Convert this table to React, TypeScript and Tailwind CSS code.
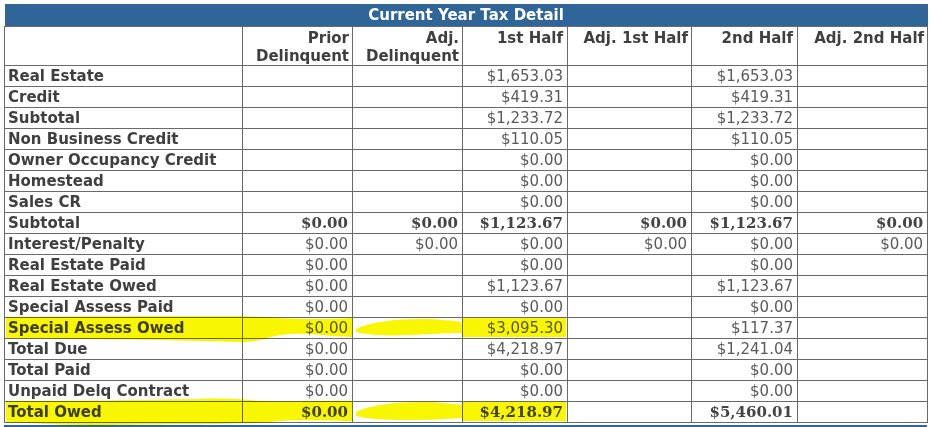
import React from 'react'

type Row = {
  label: string
  cells: string[]
  bold?: boolean
}

const ROWS: Row[] = [
  { label: 'Real Estate', cells: ['', '', '$1,653.03', '', '$1,653.03', ''] },
  { label: 'Credit', cells: ['', '', '$419.31', '', '$419.31', ''] },
  { label: 'Subtotal', cells: ['', '', '$1,233.72', '', '$1,233.72', ''] },
  { label: 'Non Business Credit', cells: ['', '', '$110.05', '', '$110.05', ''] },
  { label: 'Owner Occupancy Credit', cells: ['', '', '$0.00', '', '$0.00', ''] },
  { label: 'Homestead', cells: ['', '', '$0.00', '', '$0.00', ''] },
  { label: 'Sales CR', cells: ['', '', '$0.00', '', '$0.00', ''] },
  { label: 'Subtotal', cells: ['$0.00', '$0.00', '$1,123.67', '$0.00', '$1,123.67', '$0.00'], bold: true },
  { label: 'Interest/Penalty', cells: ['$0.00', '$0.00', '$0.00', '$0.00', '$0.00', '$0.00'] },
  { label: 'Real Estate Paid', cells: ['$0.00', '', '$0.00', '', '$0.00', ''] },
  { label: 'Real Estate Owed', cells: ['$0.00', '', '$1,123.67', '', '$1,123.67', ''] },
  { label: 'Special Assess Paid', cells: ['$0.00', '', '$0.00', '', '$0.00', ''] },
  { label: 'Special Assess Owed', cells: ['$0.00', '', '$3,095.30', '', '$117.37', ''] },
  { label: 'Total Due', cells: ['$0.00', '', '$4,218.97', '', '$1,241.04', ''] },
  { label: 'Total Paid', cells: ['$0.00', '', '$0.00', '', '$0.00', ''] },
  { label: 'Unpaid Delq Contract', cells: ['$0.00', '', '$0.00', '', '$0.00', ''] },
  { label: 'Total Owed', cells: ['$0.00', '', '$4,218.97', '', '$5,460.01', ''], bold: true },
]

const COL_WIDTHS = ['w-[238px]', 'w-[110px]', 'w-[110px]', 'w-[105px]', 'w-[124px]', 'w-[106px]', 'w-[130px]']

// yellow marker strokes, drawn over the table and multiplied in
function Highlighter() {
  return (
    <svg
      className="absolute left-0 top-0 pointer-events-none mix-blend-multiply"
      width="931"
      height="427"
      viewBox="0 0 931 427"
    >
      <g fill="#f8f600">
        {/* Special Assess Owed */}
        <path d="M6,317 C80,316 180,316 240,316 C275,317 300,321 352,318 L352,337 C320,336 300,331 275,336 C260,340 250,343 238,342 C180,340 90,339 6,338 Z" />
        <path d="M356,329 C370,322 395,319 420,319 C440,319 452,321 462,322 L462,333 C445,333 430,334 410,335 C385,336 368,335 356,332 Z" />
        <rect x="462" y="318" width="104" height="19" />
        {/* Total Owed */}
        <path d="M6,401 C60,401 140,400 200,399 C225,398 240,399 260,401 C290,403 320,400 352,401 L352,421 C320,421 300,419 270,422 C230,425 170,424 110,425 C70,426 40,423 6,422 Z" />
        <path d="M356,412 C370,405 395,402 420,402 C440,402 452,404 462,405 L462,418 C445,419 428,420 408,420 C385,420 368,419 356,416 Z" />
        <rect x="462" y="402" width="104" height="19" />
      </g>
    </svg>
  )
}

export default function App() {
  return (
    <div className="relative w-[931px] h-[427px] bg-white overflow-hidden font-['DejaVu_Sans',Verdana,sans-serif]">
      <div className="pl-[4px] pt-[4px]">
        <table className="table-fixed border-collapse w-[923px] text-[15px] leading-[18px]">
          <colgroup>
            {COL_WIDTHS.map((w, i) => (
              <col key={i} className={w} />
            ))}
          </colgroup>
          <thead>
            <tr className="h-[22px] bg-[#30659a]">
              <th colSpan={7} className="p-0 text-center font-bold text-white">
                Current Year Tax Detail
              </th>
            </tr>
            <tr className="h-[39px] align-top text-[#3f3f3f]">
              <th className="border border-[#6a6a6a]" />
              <th className="border border-[#6a6a6a] pt-[2px] pr-[3px] text-right font-bold">
                Prior
                <br />
                Delinquent
              </th>
              <th className="border border-[#6a6a6a] pt-[2px] pr-[3px] text-right font-bold">
                Adj.
                <br />
                Delinquent
              </th>
              <th className="border border-[#6a6a6a] pt-[2px] pr-[4px] text-right font-bold">1st Half</th>
              <th className="border border-[#6a6a6a] pt-[2px] pr-[3px] text-right font-bold">Adj. 1st Half</th>
              <th className="border border-[#6a6a6a] pt-[2px] pr-[4px] text-right font-bold">2nd Half</th>
              <th className="border border-[#6a6a6a] pt-[2px] pr-[3px] text-right font-bold">Adj. 2nd Half</th>
            </tr>
          </thead>
          <tbody>
            {ROWS.map((row, i) => (
              <tr key={i} className="h-[21px]">
                <td className="border border-[#6a6a6a] pl-[3px] pt-[1px] font-bold text-[#3f3f3f] whitespace-nowrap">
                  {row.label}
                </td>
                {row.cells.map((c, j) => (
                  <td
                    key={j}
                    className={`border border-[#6a6a6a] pr-[4px] pt-[1px] text-right whitespace-nowrap ${
                      row.bold
                        ? "font-['DejaVu_Serif',serif] font-bold text-[#444]"
                        : 'text-[#5a5a5a]'
                    }`}
                  >
                    {c}
                  </td>
                ))}
              </tr>
            ))}
          </tbody>
        </table>
        <div className="mt-[2px] h-[2px] w-[923px] bg-[#30659a]" />
      </div>
      <Highlighter />
    </div>
  )
}
